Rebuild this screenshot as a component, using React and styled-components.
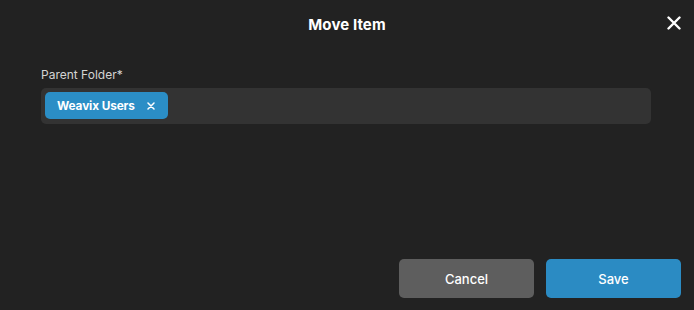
import React from "react";
import styled, { createGlobalStyle } from "styled-components";

const Global = createGlobalStyle`
  html, body { margin: 0; padding: 0; background: #222222; }
  body { font-family: "Inter", "Noto Sans", sans-serif; }
  * { box-sizing: border-box; }
`;

const Dialog = styled.div`
  width: 694px;
  height: 310px;
  background: #222222;
  display: flex;
  flex-direction: column;
  color: #fff;
`;

const Header = styled.div`
  position: relative;
  height: 48px;
  display: flex;
  align-items: center;
  justify-content: center;
`;

const Title = styled.h1`
  margin: 0;
  font-size: 15px;
  font-weight: 700;
  color: #ffffff;
  letter-spacing: 0.1px;
`;

const Close = styled.button`
  position: absolute;
  right: 12px;
  top: 15px;
  width: 16px;
  height: 16px;
  padding: 0;
  border: 0;
  background: transparent;
  display: flex;
  align-items: center;
  justify-content: center;
`;

const Body = styled.div`
  flex: 1;
  padding: 20px 43px 0 41px;
  display: flex;
  flex-direction: column;
`;

const Label = styled.label`
  font-size: 12px;
  color: #d4d4d4;
  line-height: 14px;
  margin-bottom: 6px;
`;

const Field = styled.div`
  height: 36px;
  background: #333333;
  border-radius: 5px;
  padding: 4px;
  display: flex;
  align-items: flex-start;
`;

const Chip = styled.div`
  height: 27px;
  background: #2b8ec6;
  border-radius: 5px;
  padding: 0 13px 0 12px;
  display: flex;
  align-items: center;
  gap: 12px;
  font-size: 11.8px;
  font-weight: 700;
  letter-spacing: -0.1px;
  color: #fff;
`;

const ChipX = styled.span`
  display: flex;
  align-items: center;
`;

const Footer = styled.div`
  display: flex;
  justify-content: flex-end;
  gap: 12px;
  padding: 0 13px 12px 0;
`;

const Button = styled.button`
  width: 135px;
  height: 39px;
  border: 0;
  border-radius: 5px;
  background: ${(p) => (p.$primary ? "#2b8bc3" : "#5e5e5e")};
  color: #fff;
  font-family: inherit;
  font-size: 13px;
  font-weight: 500;
`;

export default function App() {
  return (
    <>
      <Global />
      <Dialog>
        <Header>
          <Title>Move Item</Title>
          <Close aria-label="Close">
            <svg width="14" height="14" viewBox="0 0 14 14">
              <path d="M1.5 1.5 L12.5 12.5 M12.5 1.5 L1.5 12.5" stroke="#fff" strokeWidth="2.4" strokeLinecap="round" />
            </svg>
          </Close>
        </Header>
        <Body>
          <Label>Parent Folder*</Label>
          <Field>
            <Chip>
              Weavix Users
              <ChipX>
                <svg width="8" height="8" viewBox="0 0 8 8">
                  <path d="M1 1 L7 7 M7 1 L1 7" stroke="#fff" strokeWidth="1.5" strokeLinecap="round" />
                </svg>
              </ChipX>
            </Chip>
          </Field>
        </Body>
        <Footer>
          <Button>Cancel</Button>
          <Button $primary>Save</Button>
        </Footer>
      </Dialog>
    </>
  );
}
